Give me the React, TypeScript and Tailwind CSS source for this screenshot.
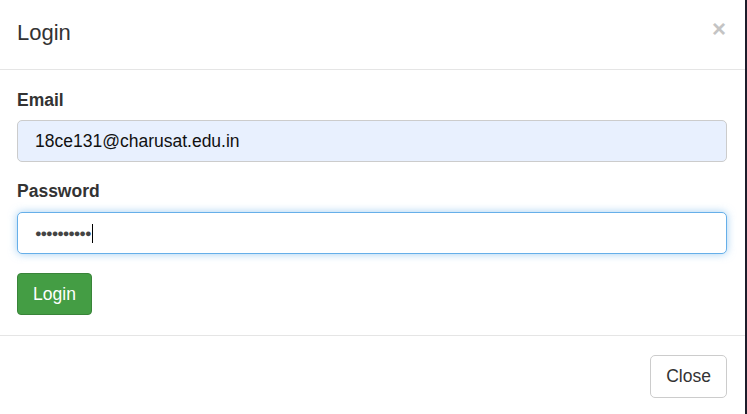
import React from "react";

export default function App() {
  return (
    <div className="w-[747px] h-[414px] bg-[#1c1c2a] overflow-hidden" style={{ fontFamily: '"Liberation Sans", Arial, sans-serif' }}>
      <div className="w-[745px] h-[414px] bg-white flex flex-col text-[#333]">
        <div className="h-[70px] border-b border-[#e5e5e5] flex items-center justify-between pl-[17px] pr-[20px]">
          <div className="text-[22px] leading-none mt-[-4px]">Login</div>
          <div className="text-[24px] font-bold text-[#c4c4c4] leading-none mt-[-12px] mr-[-1px]">×</div>
        </div>
        <div className="pl-[17px] pr-[18px] pt-[21px] pb-[20px] border-b border-[#e5e5e5] flex flex-col">
          <label className="text-[17.5px] font-bold leading-[19px]">Email</label>
          <div className="mt-[10px] h-[42px] rounded-[5px] border border-[#ccc] bg-[#e8f0fe] flex items-center px-[17px] text-[17.5px] text-[#111]">
            18ce131@charusat.edu.in
          </div>
          <label className="mt-[20px] text-[17.5px] font-bold leading-[19px]">Password</label>
          <div className="mt-[11px] h-[42px] rounded-[5px] border border-[#66afe9] bg-white flex items-center px-[17px] shadow-[0_0_8px_rgba(102,175,233,0.6)]">
            <span className="text-[#444] text-[11px] tracking-[-1.1px] leading-none">●●●●●●●●●●</span>
            <span className="ml-[2px] w-px h-[19px] bg-black"></span>
          </div>
          <div className="mt-[19px]">
            <button className="h-[42px] w-[75px] rounded-[4px] bg-[#449d44] border border-[#398439] text-white text-[17.5px]">Login</button>
          </div>
        </div>
        <div className="flex justify-end pr-[18px] pt-[19px]">
          <button className="h-[43px] w-[77px] rounded-[5px] border border-[#ccc] bg-white text-[#333] text-[17.5px]">Close</button>
        </div>
      </div>
    </div>
  );
}
